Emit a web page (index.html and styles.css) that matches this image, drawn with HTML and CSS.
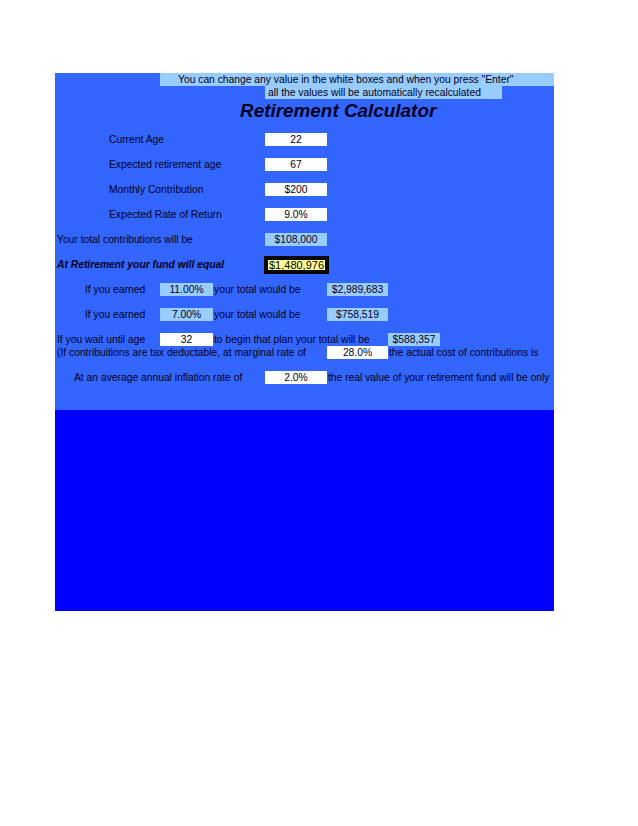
FILE: index.html
```html
<!DOCTYPE html>
<html>
<head>
<meta charset="utf-8">
<link rel="stylesheet" href="styles.css">
</head>
<body>
<div class="sheet">
  <div class="top">
    <div class="row">
      <div class="cell note1">You can change any value in the white boxes and when you press "Enter"</div>
    </div>
    <div class="row">
      <div class="cell note2">all the values will be automatically recalculated</div>
    </div>
    <div class="title-row">
      <div class="title">Retirement Calculator</div>
    </div>
    <div class="spacer-s"></div>

    <div class="row">
      <div class="cell lbl-a">Current Age</div>
      <div class="cell box white c5">22</div>
    </div>
    <div class="gap"></div>
    <div class="row">
      <div class="cell lbl-a">Expected retirement age</div>
      <div class="cell box white c5">67</div>
    </div>
    <div class="gap"></div>
    <div class="row">
      <div class="cell lbl-a">Monthly Contribution</div>
      <div class="cell box white c5">$200</div>
    </div>
    <div class="gap"></div>
    <div class="row">
      <div class="cell lbl-a">Expected Rate of Return</div>
      <div class="cell box white c5">9.0%</div>
    </div>
    <div class="gap"></div>
    <div class="row">
      <div class="cell lbl-b">Your total contributions will be</div>
      <div class="cell box light c5">$108,000</div>
    </div>
    <div class="gap"></div>
    <div class="row">
      <div class="cell lbl-b strong">At Retirement your fund will equal</div>
      <div class="cell c5 result"><span class="result-in">$1,480,976</span></div>
    </div>
    <div class="gap"></div>
    <div class="row">
      <div class="cell lbl-c">If you earned</div>
      <div class="cell box light c3">11.00%</div>
      <div class="cell lbl-d">your total would be</div>
      <div class="cell box light c6">$2,989,683</div>
    </div>
    <div class="gap"></div>
    <div class="row">
      <div class="cell lbl-c">If you earned</div>
      <div class="cell box light c3">7.00%</div>
      <div class="cell lbl-d">your total would be</div>
      <div class="cell box light c6">$758,519</div>
    </div>
    <div class="gap"></div>
    <div class="row">
      <div class="cell lbl-b">If you wait until age</div>
      <div class="cell box white c3">32</div>
      <div class="cell lbl-d">to begin that plan your total will be</div>
      <div class="cell box light c7">$588,357</div>
    </div>
    <div class="row">
      <div class="cell lbl-e">(If contribuitions are tax deductable, at marginal rate of</div>
      <div class="cell box white c6">28.0%</div>
      <div class="cell lbl-f">the actual cost of contributions is</div>
    </div>
    <div class="gap"></div>
    <div class="row">
      <div class="cell lbl-g">At an average annual inflation rate of</div>
      <div class="cell box white c5">2.0%</div>
      <div class="cell lbl-h">the real value of your retirement fund will be only</div>
    </div>
    <div class="tail"></div>
  </div>
  <div class="bottom"></div>
</div>
</body>
</html>
```

FILE: styles.css
```css
html, body {
  margin: 0;
  padding: 0;
  background: #ffffff;
}

body {
  font-family: "Liberation Sans", Arial, sans-serif;
  font-size: 10.3px;
  color: #000022;
}

.sheet {
  margin: 73px 0 0 55px;
  width: 499px;
}

.top {
  background: #3366ff;
}

.bottom {
  background: #0000ff;
  height: 201px;
}

.row {
  display: grid;
  grid-template-columns: 53px 52px 53px 52px 62px 61px 52px 62px 52px;
  height: 12.5px;
  align-items: stretch;
}

.cell {
  line-height: 13px;
  white-space: nowrap;
  overflow: visible;
}

.gap {
  height: 12.5px;
}

.spacer-s {
  height: 10px;
}

.tail {
  height: 27px;
}

.note1 {
  grid-column: 3 / 10;
  background: #99ccff;
  padding-left: 18px;
}

.note2 {
  grid-column: 5 / 9;
  background: #99ccff;
  padding-left: 3px;
}

.title-row {
  height: 25px;
  display: flex;
  align-items: center;
  padding-left: 185px;
}

.title {
  font-weight: bold;
  font-style: italic;
  font-size: 18.9px;
  line-height: 25px;
}

.box {
  text-align: center;
}

.white {
  background: #ffffff;
}

.light {
  background: #99ccff;
}

.c3 { grid-column: 3; }
.c5 { grid-column: 5; }
.c6 { grid-column: 6; }
.c7 { grid-column: 7; }

.lbl-a {
  grid-column: 2 / 5;
  grid-row: 1;
  padding-left: 1px;
}

.lbl-b {
  grid-column: 1 / 3;
  grid-row: 1;
  padding-left: 2px;
}

.strong {
  font-weight: bold;
  font-style: italic;
}

.lbl-c {
  grid-column: 1 / 3;
  grid-row: 1;
  padding-left: 30px;
}

.lbl-d {
  grid-column: 4 / 6;
  grid-row: 1;
  padding-left: 1px;
}

.lbl-e {
  grid-column: 1 / 6;
  grid-row: 1;
  padding-left: 2px;
}

.lbl-f {
  grid-column: 7 / 10;
  grid-row: 1;
  padding-left: 1px;
}

.lbl-g {
  grid-column: 1 / 5;
  grid-row: 1;
  padding-left: 19px;
}

.lbl-h {
  grid-column: 6 / 10;
  grid-row: 1;
  padding-left: 1px;
}

.result {
  display: flex;
  align-items: center;
  justify-content: center;
  background: #000000;
  margin: -2px -2px -3px -1px;
}

.result-in {
  background: #ffff99;
  color: #000;
  width: 57px;
  text-align: center;
  line-height: 10px;
  font-size: 11px;
}
```
